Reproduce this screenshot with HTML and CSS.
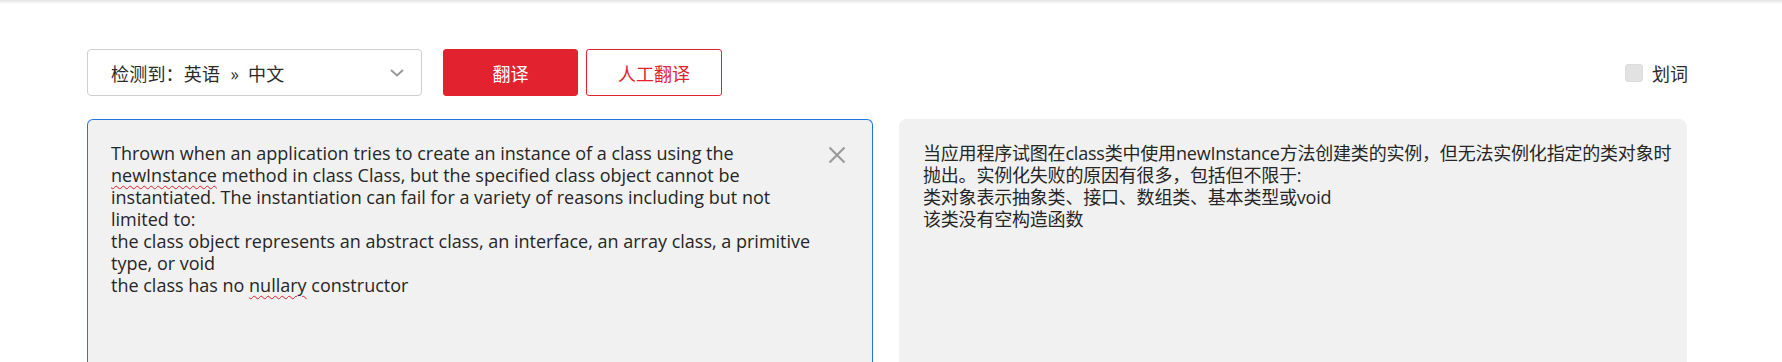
FILE: index.html
```html
<!DOCTYPE html>
<html lang="zh-CN">
<head>
<meta charset="utf-8">
<title>翻译</title>
<link rel="stylesheet" href="styles.css">
</head>
<body>
<div class="top-shadow"></div>
<main class="page">
  <div class="toolbar">
    <div class="lang-select">
      <span class="lang-text">检测到：英语<span class="lang-arrow">»</span>中文</span>
      <svg class="chevron" width="14" height="8" viewBox="0 0 14 8"><polyline points="1,1 7,6.5 13,1" fill="none" stroke="#9a9a9a" stroke-width="2"/></svg>
    </div>
    <button class="btn btn-primary">翻译</button>
    <button class="btn btn-outline">人工翻译</button>
    <label class="select-word">
      <span class="checkbox"></span>
      <span class="select-word-text">划词</span>
    </label>
  </div>
  <div class="panels">
    <div class="panel panel-input">
      <div class="input-text">Thrown when an application tries to create an instance of a class using the<br><span class="misspelled">newInstance</span> method in class Class, but the specified class object cannot be<br>instantiated. The instantiation can fail for a variety of reasons including but not<br>limited to:<br>the class object represents an abstract class, an interface, an array class, a primitive<br>type, or void<br>the class has no <span class="misspelled">nullary</span> constructor</div>
      <svg class="clear-btn" width="18" height="18" viewBox="0 0 18 18"><path d="M1.5 1.5 L16.5 16.5 M16.5 1.5 L1.5 16.5" stroke="#9b9b9b" stroke-width="2.2" fill="none"/></svg>
    </div>
    <div class="panel panel-output">
      <div class="output-text">当应用程序试图在class类中使用newInstance方法创建类的实例，但无法实例化指定的类对象时<br>抛出。实例化失败的原因有很多，包括但不限于:<br>类对象表示抽象类、接口、数组类、基本类型或void<br>该类没有空构造函数</div>
    </div>
  </div>
</main>
</body>
</html>
```
FILE: styles.css
```css
* { box-sizing: border-box; }
html, body {
  margin: 0;
  padding: 0;
  background: #fff;
  overflow: hidden;
}
body {
  font-family: "Open Sans", "Noto Sans CJK SC", sans-serif;
  color: #333;
}
.top-shadow {
  height: 4px;
  background: linear-gradient(#e3e3e3, #f4f4f4 60%, #fff);
}
.page {
  padding: 0 95px 0 87px;
}
.toolbar {
  margin-top: 45px;
  display: flex;
  align-items: center;
  height: 47px;
}
.lang-select {
  width: 335px;
  height: 47px;
  border: 1px solid #cfcfcf;
  border-radius: 4px;
  display: flex;
  align-items: center;
  justify-content: space-between;
  padding: 0 17px 0 23px;
  background: #fff;
}
.lang-text {
  font-family: "Noto Sans CJK SC", sans-serif;
  font-size: 18px;
  color: #2b2b2b;
  letter-spacing: 0.2px;
}
.lang-arrow {
  display: inline-block;
  margin: 0 9px 0 10px;
}
.chevron { display: block; }
.btn {
  height: 47px;
  border-radius: 3px;
  font-family: "Noto Sans CJK SC", sans-serif;
  font-size: 18px;
  padding: 0;
  cursor: pointer;
}
.btn-primary {
  margin-left: 21px;
  width: 135px;
  background: #e2232f;
  border: 1px solid #e2232f;
  color: #fff;
}
.btn-outline {
  margin-left: 8px;
  width: 136px;
  background: #fff;
  border: 1px solid #e2232f;
  color: #e2232f;
}
.select-word {
  margin-left: auto;
  display: flex;
  align-items: center;
  gap: 9px;
  margin-right: -1px;
}
.checkbox {
  width: 18px;
  height: 18px;
  border-radius: 3px;
  background: #e2e2e2;
  border: 1px solid #dcdcdc;
}
.select-word-text {
  font-family: "Noto Sans CJK SC", sans-serif;
  font-size: 18px;
  color: #2b2b2b;
}
.panels {
  margin-top: 23px;
  display: grid;
  grid-template-columns: 786px minmax(0, 1fr);
  gap: 26px;
}
.panel {
  height: 260px;
  background: #f1f1f1;
  min-width: 0;
  overflow: hidden;
}
.panel-input {
  position: relative;
  border: 1px solid #1f74e6;
  border-bottom: none;
  border-radius: 6px 6px 0 0;
  padding: 22px 22px 0 23px;
}
.input-text {
  font-size: 18px;
  line-height: 22px;
  white-space: nowrap;
  color: #262626;
}
.misspelled {
  text-decoration: underline wavy #e0202a;
  text-decoration-thickness: 1px;
  text-underline-offset: 3px;
}
.clear-btn {
  position: absolute;
  top: 26px;
  right: 26px;
}
.panel-output {
  border-radius: 8px 8px 0 0;
  padding: 23px 20px 0 24px;
}
.output-text {
  font-family: "Open Sans", "Noto Sans CJK SC", sans-serif;
  font-size: 18px;
  line-height: 22px;
  letter-spacing: -0.2px;
  white-space: nowrap;
  color: #262626;
}
```
